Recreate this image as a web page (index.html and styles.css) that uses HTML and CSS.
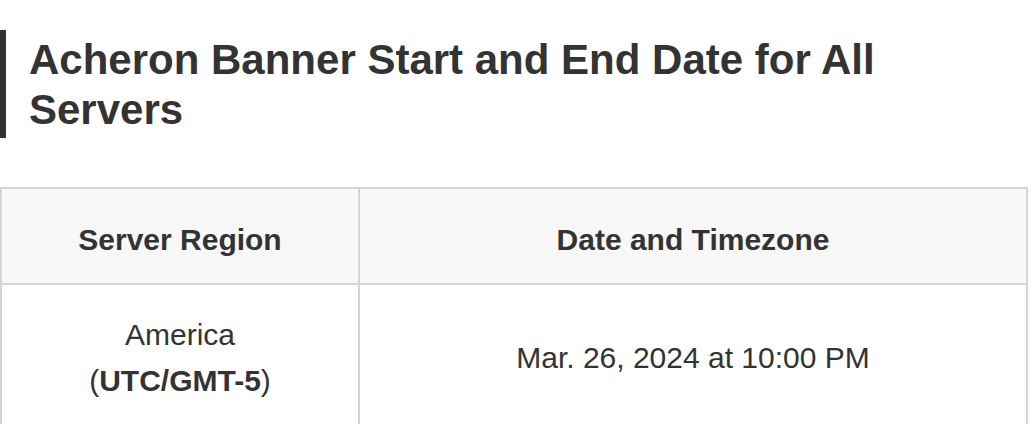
FILE: index.html
```html
<!DOCTYPE html>
<html>
<head>
<meta charset="utf-8">
<link rel="stylesheet" href="styles.css">
</head>
<body>
<h2 class="title">Acheron Banner Start and End Date for All Servers</h2>
<table class="dates">
  <thead>
    <tr><th class="col-region">Server Region</th><th>Date and Timezone</th></tr>
  </thead>
  <tbody>
    <tr><td>America<br>(<b>UTC/GMT-5</b>)</td><td>Mar. 26, 2024 at 10:00 PM</td></tr>
  </tbody>
</table>
</body>
</html>
```
FILE: styles.css
```css
html, body {
  margin: 0;
  padding: 0;
  background: #fff;
}
body {
  font-family: "Liberation Sans", Arial, sans-serif;
  color: #333;
}
.title {
  margin: 30px 0 0 0;
  padding: 5px 0 3px 23px;
  border-left: 6px solid #333;
  font-size: 42px;
  line-height: 50px;
  font-weight: bold;
  color: #333;
  width: 900px;
}
.dates {
  margin-top: 49px;
  border-collapse: collapse;
  width: 1028px;
  font-size: 30px;
  line-height: 46px;
}
.dates th, .dates td {
  border: 2px solid #d4d4d4;
  text-align: center;
  vertical-align: middle;
}
.dates th {
  background: #f8f8f8;
  font-weight: bold;
  padding: 28px 10px 20px;
}
.dates td {
  padding: 27px 10px 24px;
}
.col-region {
  width: 336px;
}
```
